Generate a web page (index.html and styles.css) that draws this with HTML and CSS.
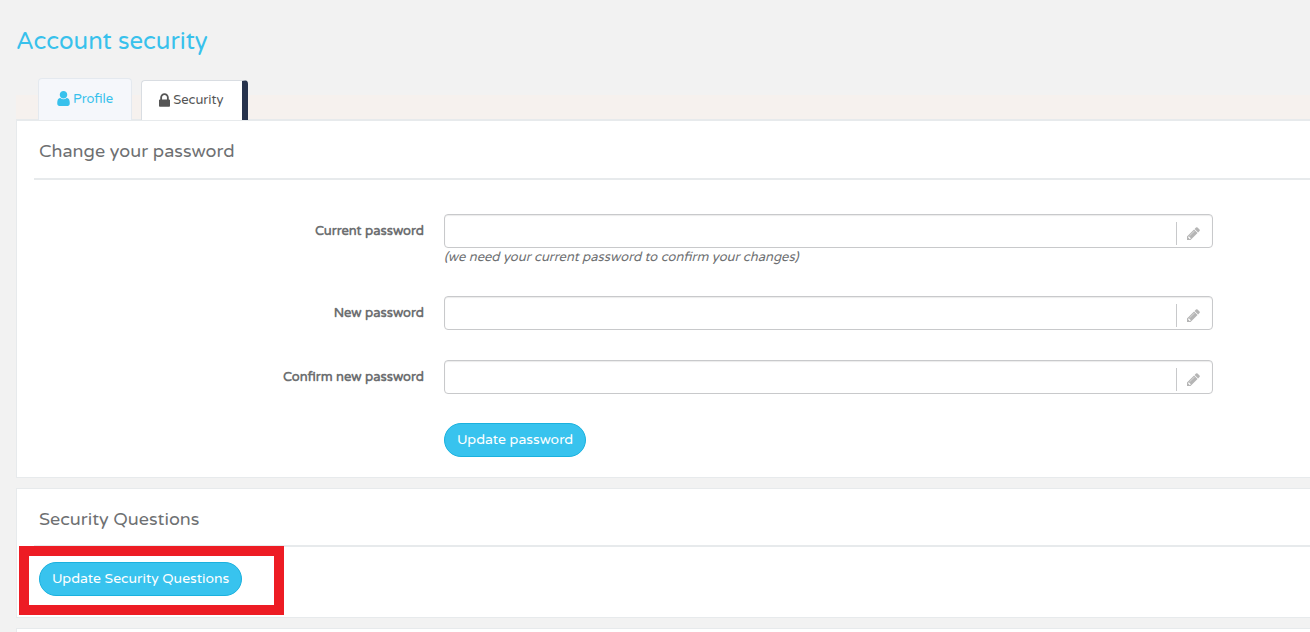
FILE: index.html
```html
<!DOCTYPE html>
<html lang="en">
<head>
<meta charset="utf-8">
<title>Account security</title>
<link rel="stylesheet" href="styles.css">
</head>
<body>
<svg class="sprite" aria-hidden="true">
  <symbol id="pencil" viewBox="128 128 1536 1536"><path d="M491 1536l91-91-235-235-91 91v107h128v128h107zm523-928q0-22-22-22-10 0-17 7l-542 542q-7 7-7 17 0 22 22 22 10 0 17-7l542-542q7-7 7-17zm-54-192l416 416-832 832h-416v-416zm683 96q0 53-37 90l-166 166-416-416 166-165q36-38 90-38 53 0 91 38l235 234q37 39 37 91z"/></symbol>
</svg>
<main class="page">
  <h1 class="page-title">Account security</h1>
  <nav class="tabs">
    <a class="tab" href="#profile">
      <svg class="icon-user" viewBox="256 128 1280 1536" aria-hidden="true"><path d="M1536 1399q0 109-62.500 187t-150.500 78h-854q-88 0-150.500-78t-62.500-187q0-85 8.500-160.500t31.500-152 58.500-131 94-89 134.500-34.500q131 128 313 128t313-128q76 0 134.500 34.500t94 89 58.500 131 31.500 152 8.500 160.500zm-256-887q0 159-112.500 271.500t-271.500 112.500-271.500-112.500-112.500-271.500 112.500-271.500 271.500-112.500 271.500 112.500 112.500 271.500z"/></svg>
      Profile
    </a>
    <a class="tab tab-active" href="#security" aria-current="page">
      <svg class="icon-lock" viewBox="320 128 1152 1408" aria-hidden="true"><path d="M640 768h512v-192q0-106-75-181t-181-75-181 75-75 181v192zm832 96v576q0 40-28 68t-68 28h-960q-40 0-68-28t-28-68v-576q0-40 28-68t68-28h32v-192q0-184 132-316t316-132 316 132 132 316v192h32q40 0 68 28t28 68z"/></svg>
      Security
    </a>
  </nav>

  <section class="panel panel-first" id="security">
    <h2 class="panel-title">Change your password</h2>
    <form class="form">
      <div class="row">
        <label class="label" for="current">Current password</label>
        <div class="field">
          <div class="control"><input class="input" type="password" id="current" aria-describedby="hint"><span class="addon"><svg class="icon-pencil" aria-hidden="true"><use href="#pencil"/></svg></span></div>
          <em class="hint" id="hint">(we need your current password to confirm your changes)</em>
        </div>
      </div>
      <div class="row">
        <label class="label" for="new">New password</label>
        <div class="field">
          <div class="control"><input class="input" type="password" id="new"><span class="addon"><svg class="icon-pencil" aria-hidden="true"><use href="#pencil"/></svg></span></div>
        </div>
      </div>
      <div class="row row-last">
        <label class="label" for="confirm">Confirm new password</label>
        <div class="field">
          <div class="control"><input class="input" type="password" id="confirm"><span class="addon"><svg class="icon-pencil" aria-hidden="true"><use href="#pencil"/></svg></span></div>
        </div>
      </div>
      <div class="row row-action">
        <button class="button" type="submit">Update password</button>
      </div>
    </form>
  </section>

  <section class="panel">
    <h2 class="panel-title">Security Questions</h2>
    <div class="panel-body">
      <button class="button" type="button">Update Security Questions</button>
      <span class="highlight"></span>
    </div>
  </section>

  <section class="panel panel-last"></section>
</main>
</body>
</html>
```
FILE: styles.css
```css
* { box-sizing: border-box; }

body {
  margin: 0;
  background: #f2f2f2;
  color: #6e7072;
  font-family: "Varela Round", "Noto Sans", sans-serif;
  font-size: 13px;
  line-height: 18px;
}

.sprite { display: none; }

.page {
  display: flex;
  flex-direction: column;
  height: 100vh;
  padding-left: 16px;
  overflow: hidden;
}

.page-title {
  margin: 0;
  padding: 26px 0 20px;
  color: #38c1ec;
  font-size: 24px;
  font-weight: 400;
  line-height: 32px;
}

.tabs {
  display: flex;
  align-items: flex-end;
  gap: 9px;
  padding-left: 22px;
  border-bottom: 2px solid #e7eaec;
  background: linear-gradient(#f2f2f2 17px, #f6f1ee 17px);
}

.tab {
  display: flex;
  align-items: center;
  gap: 3px;
  height: 42px;
  margin-bottom: -1px;
  padding: 0 18px 2px;
  border: 1px solid #e4e9ef;
  border-bottom: 0;
  border-radius: 4px 4px 0 0;
  background: #f5f7fb;
  color: #38c1ec;
  text-decoration: none;
}

.tab-active {
  height: 40px;
  padding: 0 19px 2px 17px;
  border: 1px solid #d9dde2;
  border-right: 6px solid #27334d;
  border-bottom: 0;
  background: #fff;
  color: #555;
}

.tab svg, .icon-pencil { fill: currentColor; }
.icon-user { width: 13px; height: 15px; }
.icon-lock { width: 11px; height: 14px; }
.icon-pencil { width: 13px; height: 13px; }

.panel {
  flex: none;
  margin-bottom: 10px;
  border: 1px solid #e7eaec;
  border-right: 0;
  background: #fff;
}

.panel-first { border-top: 0; }
.panel-last { height: 20px; margin: 0; }

.panel-title {
  margin: 0 0 0 17px;
  padding: 18px 5px 14px;
  border-bottom: 2px solid #e7eaec;
  font-size: 18px;
  font-weight: 400;
  line-height: 24px;
}

.panel-first .panel-title { padding-bottom: 15px; }

.form { padding: 34px 97px 20px 0; }

.row {
  display: grid;
  grid-template-columns: 407px 1fr;
  column-gap: 20px;
  margin-bottom: 30px;
}

.row-last { margin-bottom: 29px; }

.row-action { margin: 0; padding-left: 427px; }

.label {
  padding-top: 8px;
  font-weight: 700;
  text-align: right;
}

.control {
  display: flex;
  align-items: center;
  height: 34px;
  border: 1px solid #c8c9cb;
  border-radius: 4px;
  background: #fff;
  box-shadow: inset 0 1px 1px #ececec;
}

.input {
  flex: 1;
  min-width: 0;
  height: 100%;
  padding: 0 12px;
  border: 0;
  outline: 0;
  background: transparent;
  font: inherit;
}

.addon {
  display: flex;
  align-items: center;
  justify-content: center;
  align-self: flex-end;
  width: 36px;
  height: 23px;
  margin-bottom: 2px;
  padding-right: 2px;
  border-left: 1px solid #c8c9cb;
  color: #b5b5b5;
}

.hint { display: block; }

.button {
  justify-self: start;
  height: 34px;
  padding: 0 12px 1px;
  border: 1px solid #1ab1de;
  border-radius: 17px;
  background: #38c3ee;
  color: #fff;
  font-family: inherit;
  font-size: 14px;
  line-height: 20px;
  white-space: nowrap;
}

.panel-body {
  position: relative;
  padding: 15px 22px 21px;
}

.highlight {
  position: absolute;
  top: -1px;
  left: 2px;
  width: 265px;
  height: 69px;
  border: 10px solid #ed1c24;
  pointer-events: none;
}
```
